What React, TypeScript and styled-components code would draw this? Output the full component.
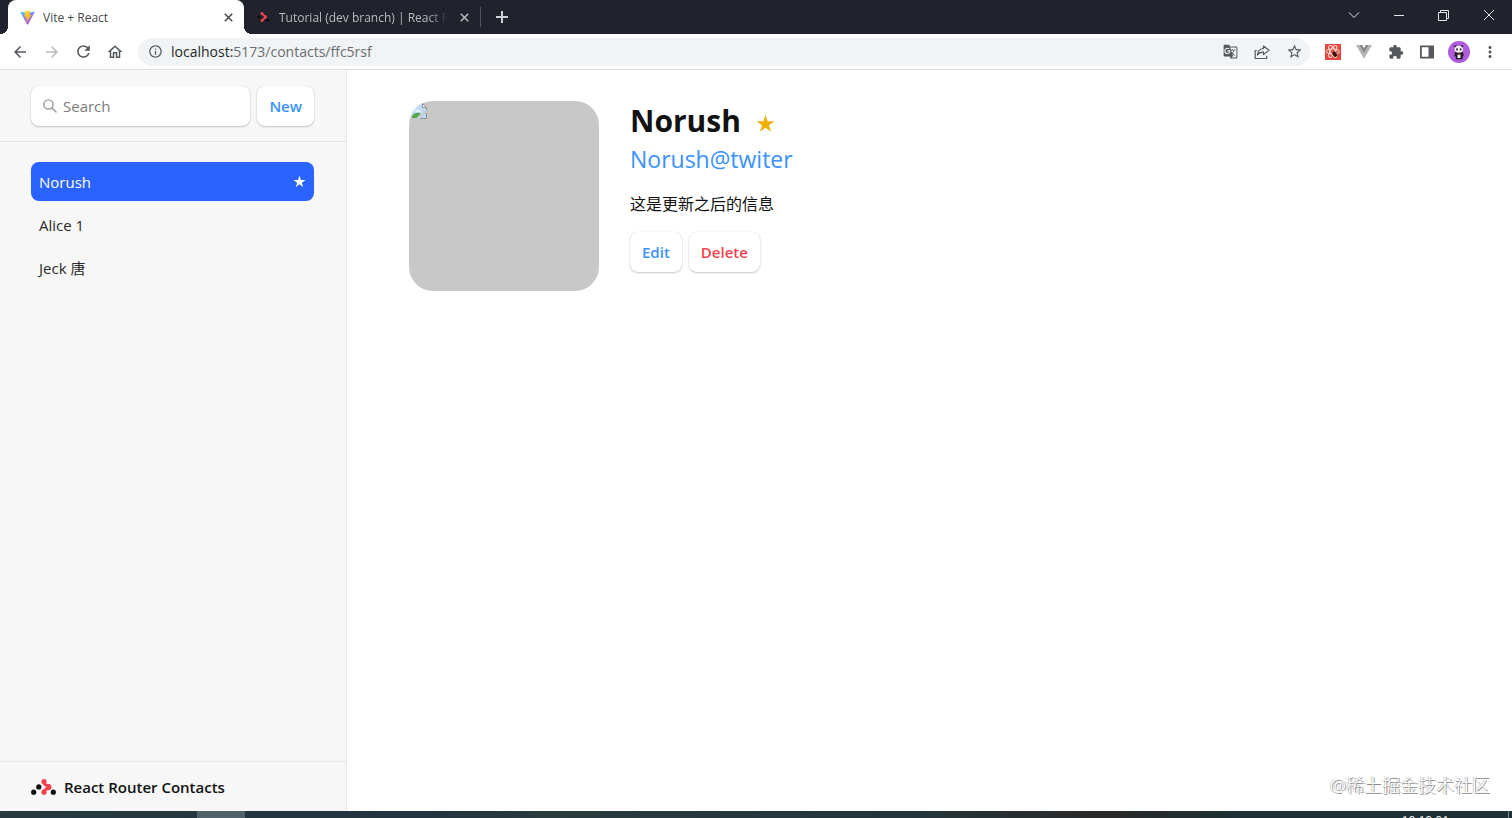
import React from "react";
import styled, { createGlobalStyle } from "styled-components";
import {
  MdArrowBack,
  MdArrowForward,
  MdRefresh,
  MdOutlineHome,
  MdInfoOutline,
  MdExtension,
  MdMoreVert,
  MdStarBorder,
  MdGTranslate,
} from "react-icons/md";

const GlobalStyle = createGlobalStyle`
  *, *::before, *::after { box-sizing: border-box; }
  body {
    margin: 0;
    font-family: "Open Sans", "Noto Sans CJK SC", sans-serif;
    font-size: 15px;
    line-height: 20px;
    color: #121212;
    background: #ffffff;
  }
  button, input { font: inherit; color: inherit; }
  button { border: 0; background: none; padding: 0; cursor: pointer; }
  h1, p, ul { margin: 0; padding: 0; }
  a { color: inherit; text-decoration: none; }
  svg { display: block; flex: none; }
`;

const Screen = styled.div`
  display: flex;
  flex-direction: column;
  min-height: 100vh;
`;

/* Browser tab strip */

const TabStrip = styled.div`
  display: flex;
  height: 34px;
  padding: 0 1px 0 8px;
  background: #20232b;
`;

const Tab = styled.div<{ $active?: boolean }>`
  position: relative;
  display: flex;
  align-items: center;
  gap: 8px;
  width: 236px;
  padding: 0 8px 0 12px;
  border-radius: 8px 8px 0 0;
  font-size: 12px;
  background: ${(p) => (p.$active ? "#ffffff" : "transparent")};
  color: ${(p) => (p.$active ? "#45484c" : "#b9bbbf")};

  &::before, &::after {
    content: "";
    display: ${(p) => (p.$active ? "block" : "none")};
    position: absolute;
    bottom: 0;
    width: 8px;
    height: 8px;
  }
  &::before {
    right: 100%;
    background: radial-gradient(circle at 0 0, transparent 8px, #ffffff 8px);
  }
  &::after {
    left: 100%;
    background: radial-gradient(circle at 100% 0, transparent 8px, #ffffff 8px);
  }
`;

const TabTitle = styled.span<{ $fade?: boolean }>`
  flex: 1;
  min-width: 0;
  padding-top: 2px;
  overflow: hidden;
  white-space: nowrap;
  mask-image: ${(p) =>
    p.$fade ? "linear-gradient(to right, #000 88%, transparent)" : "none"};
`;

const TabButton = styled.button`
  display: grid;
  place-items: center;
  width: 16px;
  height: 16px;
`;

const TabDivider = styled.span`
  align-self: center;
  width: 1px;
  height: 20px;
  background: #50535a;
`;

const NewTabButton = styled.button`
  display: grid;
  place-items: center;
  width: 42px;
  color: #d0d2d5;
`;

const WindowControls = styled.div`
  display: flex;
  margin-left: auto;
`;

const WindowButton = styled.button`
  display: grid;
  place-items: center;
  width: 45px;
  height: 30px;
  color: #e4e5e7;
`;

/* Browser toolbar */

const Toolbar = styled.div`
  display: flex;
  align-items: center;
  gap: 7px;
  height: 36px;
  padding: 0 6px 0 4px;
  border-bottom: 1px solid #dfe1e3;
  background: #ffffff;
  color: #55585c;
`;

const ButtonGroup = styled.div<{ $count: number; $width: number }>`
  display: grid;
  grid-template-columns: repeat(${(p) => p.$count}, 1fr);
  width: ${(p) => p.$width}px;
`;

const ToolButton = styled.button<{ $dim?: boolean }>`
  display: grid;
  place-items: center;
  height: 28px;
  color: ${(p) => (p.$dim ? "#b9bbbe" : "inherit")};
`;

const AddressBar = styled.div`
  display: flex;
  flex: 1;
  align-items: center;
  gap: 8px;
  height: 28px;
  padding-left: 10px;
  border-radius: 14px;
  background: #f1f3f4;
`;

const Url = styled.span`
  flex: 1;
  font-size: 14px;
  color: #6a6d71;
`;

const Host = styled.span`
  color: #24262a;
`;

/* Contacts app */

const Page = styled.div`
  position: relative;
  display: flex;
  flex: 1;
`;

const Sidebar = styled.aside`
  display: flex;
  flex-direction: column;
  width: 347px;
  border-right: 1px solid #e6e6e6;
  background: #f7f7f7;
`;

const SidebarTop = styled.div`
  display: flex;
  gap: 7px;
  padding: 16px 32px 15px 31px;
  border-bottom: 1px solid #e3e3e3;
`;

const SearchForm = styled.form`
  position: relative;
  flex: 1;
  min-width: 0;
`;

const SearchIcon = styled.span`
  position: absolute;
  top: 13px;
  left: 12px;
  color: #999999;
`;

const SearchInput = styled.input`
  width: 100%;
  height: 40px;
  padding: 0 12px 0 32px;
  border: 0;
  border-radius: 8px;
  outline: 0;
  background: #ffffff;
  box-shadow: 0 0 1px rgba(0, 0, 0, 0.2), 0 1px 2px rgba(0, 0, 0, 0.2);

  &::placeholder { color: #7b7b7b; opacity: 1; }
`;

const CardButton = styled.button<{ $danger?: boolean }>`
  height: 40px;
  padding: 0 12px;
  border-radius: 8px;
  background: #ffffff;
  box-shadow: 0 0 1px rgba(0, 0, 0, 0.2), 0 1px 2px rgba(0, 0, 0, 0.2);
  font-weight: 600;
  color: ${(p) => (p.$danger ? "#f44250" : "#3992ff")};
`;

const ContactNav = styled.nav`
  flex: 1;
  padding: 20px 32px 20px 31px;
`;

const ContactList = styled.ul`
  display: flex;
  flex-direction: column;
  gap: 4px;
  list-style: none;
`;

const ContactLink = styled.a<{ $active: boolean }>`
  display: flex;
  align-items: center;
  justify-content: space-between;
  height: 39px;
  padding: 0 8px;
  border-radius: 8px;
  background: ${(p) => (p.$active ? "#2a63ff" : "transparent")};
  color: ${(p) => (p.$active ? "#ffffff" : "#2b2b2b")};
`;

const Brand = styled.footer`
  display: flex;
  align-items: center;
  gap: 8px;
  height: 50px;
  padding: 0 31px;
  border-top: 1px solid #e8e8e8;
  font-weight: 600;
`;

const Detail = styled.main`
  display: flex;
  flex: 1;
  align-items: flex-start;
  gap: 31px;
  padding: 31px 62px;
`;

const Avatar = styled.div`
  width: 190px;
  height: 190px;
  padding: 2px;
  overflow: hidden;
  border-radius: 24px;
  background: #c8c8c8;
`;

const Info = styled.div`
  display: flex;
  flex-direction: column;
  align-items: flex-start;
`;

const NameRow = styled.div`
  display: flex;
  align-items: center;
  gap: 15px;
`;

const Name = styled.h1`
  font-size: 30px;
  font-weight: 700;
  line-height: 40px;
`;

const FavoriteButton = styled.button`
  padding-top: 4px;
  color: #eeb004;
`;

const Twitter = styled.a`
  font-size: 23px;
  line-height: 36px;
  color: #3992ff;
`;

const Notes = styled.p`
  margin: 15px 0 16px;
  font-size: 16px;
  line-height: 24px;
`;

const Actions = styled.div`
  display: flex;
  gap: 7px;
`;

const Watermark = styled.span`
  position: absolute;
  right: 22px;
  bottom: 14px;
  font-size: 18px;
  font-weight: 300;
  line-height: 24px;
  color: #ffffff;
  text-shadow: 1px 1px 0 #8a8a8a, -1px 0 0 #c4c4c4;
`;

/* Top edge of the desktop taskbar */

const Taskbar = styled.div`
  display: flex;
  height: 7px;
  overflow: hidden;
  padding-left: 197px;
  background: linear-gradient(to right, #263a40, #22343f 28%, #293b3d 36%, #24363b 60%, #2a2829 73%, #1d3134 82%, #1d3134);
`;

const TaskbarApp = styled.span`
  width: 48px;
  background: #52626a;
`;

const Clock = styled.span`
  margin-left: auto;
  margin-right: 59px;
  font-size: 12px;
  color: #ffffff;
`;

const ShowDesktop = styled.span`
  width: 4px;
  flex: none;
  border-left: 1px solid #7b898b;
`;

const ViteLogo = () => (
  <svg width="15" height="15" viewBox="0 0 32 32" aria-hidden="true">
    <defs>
      <linearGradient id="viteBody" x1="0" y1="0" x2="0.6" y2="1">
        <stop offset="0" stopColor="#41d1ff" />
        <stop offset="1" stopColor="#bd34fe" />
      </linearGradient>
      <linearGradient id="viteBolt" x1="0" y1="0" x2="0" y2="1">
        <stop offset="0" stopColor="#ffea83" />
        <stop offset="0.2" stopColor="#ffcf26" />
        <stop offset="1" stopColor="#ffa800" />
      </linearGradient>
    </defs>
    <path fill="url(#viteBody)" d="M31.3 4.8 16.8 31c-.3.6-1.2.6-1.5 0L.7 4.8c-.4-.7.2-1.5 1-1.3L16 6l14.300-2.500c.8-.2 1.400.6 1 1.300z" />
    <path fill="url(#viteBolt)" d="M22.400 0 10.300 2.400 9.500 15l4-.8-1.200 5.800 3-.8L13.500 28 24.500 10l-4.300.8L22.700 0z" />
  </svg>
);

const RouterMark = () => (
  <svg width="15" height="15" viewBox="0 0 15 15" aria-hidden="true">
    <path d="M6 3.500c0 2 3.500 1.500 3.500 3.500S6 8.500 6 10.800" fill="none" stroke="#f44250" strokeWidth="1.600" />
    <circle cx="6" cy="3.600" r="1.500" fill="#f44250" />
    <circle cx="9.300" cy="7" r="1.700" fill="#f44250" />
    <circle cx="6" cy="10.500" r="1.500" fill="#f44250" />
    <circle cx="3" cy="7.200" r="1.600" fill="#0b0d10" />
    <circle cx="11.800" cy="10.500" r="1.500" fill="#0b0d10" />
  </svg>
);

const RouterLogo = () => (
  <svg width="25" height="16" viewBox="0 0 25 16" aria-hidden="true">
    <path d="M13 2.700c.4 3 1 3.300 3.600 3.500 3.200.2 3.200 3.600 0 3.800-2.600.2-3.200.5-3.600 3.100" fill="none" stroke="#f44250" strokeWidth="3" strokeLinecap="round" />
    <circle cx="13" cy="2.700" r="2.600" fill="#f44250" />
    <circle cx="17.400" cy="8" r="2.700" fill="#f44250" />
    <circle cx="13" cy="13.200" r="2.600" fill="#f44250" />
    <circle cx="7.800" cy="7.900" r="2.600" fill="#121212" />
    <circle cx="2.700" cy="13.200" r="2.600" fill="#121212" />
    <circle cx="22.300" cy="13.200" r="2.600" fill="#121212" />
  </svg>
);

const Cross = ({ size, weight }: { size: number; weight: number }) => (
  <svg width={size} height={size} viewBox="0 0 12 12" stroke="currentColor" strokeWidth={weight} aria-hidden="true">
    <path d="m1 1 10 10M11 1 1 11" />
  </svg>
);

const Star = ({ size }: { size: number }) => (
  <svg width={size} height={size} viewBox="0 0 20 20" fill="currentColor" aria-hidden="true">
    <path d="m10 .8 2.200 6.800h7.200l-5.800 4.200 2.200 6.900-5.800-4.300-5.800 4.300 2.200-6.900L.6 7.600h7.200z" />
  </svg>
);

const ShareIcon = () => (
  <svg width="16" height="16" viewBox="0 0 16 16" fill="none" stroke="currentColor" strokeWidth="1.200" strokeLinejoin="round" aria-hidden="true">
    <path d="M9.500 2 15 6.300 9.500 10.600V8.200C6.600 8 4.800 8.900 3.400 11c.3-3.700 2.400-6.100 6.100-6.500z" />
    <path d="M2.800 6.500H1.200v8h11.500v-2.700" />
  </svg>
);

const ReactToolsIcon = () => (
  <svg width="16" height="16" viewBox="0 0 16 16" aria-hidden="true">
    <path fill="#e2483d" d="M0 0h16v16H0z" />
    <g fill="none" stroke="#ffe1dd">
      <ellipse cx="7.800" cy="7.500" rx="6.600" ry="2.600" />
      <ellipse cx="7.800" cy="7.500" rx="6.600" ry="2.600" transform="rotate(60 7.800 7.500)" />
      <ellipse cx="7.800" cy="7.500" rx="6.600" ry="2.600" transform="rotate(120 7.800 7.500)" />
    </g>
    <ellipse cx="9.800" cy="10.300" rx="1.900" ry="2.800" fill="#3a120f" transform="rotate(-25 9.800 10.300)" />
    <path d="m6.800 9.500 6 2.500M7.500 12.500l4.500-4" stroke="#3a120f" strokeWidth=".7" />
  </svg>
);

const VueIcon = () => (
  <svg width="16" height="14" viewBox="0 0 16 14" aria-hidden="true">
    <path fill="#b4b4b4" d="M0 0h3.200L8 8.300 12.800 0H16L8 13.800z" />
    <path fill="#858585" d="M3.200 0h3L8 3.200 9.800 0h3L8 8.300z" />
  </svg>
);

const SidePanelIcon = () => (
  <svg width="14" height="14" viewBox="0 0 14 14" aria-hidden="true">
    <path fill="none" stroke="currentColor" strokeWidth="1.800" d="M.9 1.400h12.200v11.200H.9z" />
    <path fill="currentColor" d="M8.500 1h5v12h-5z" />
  </svg>
);

const PandaAvatar = () => (
  <svg width="22" height="22" viewBox="0 0 22 22" aria-hidden="true">
    <circle cx="11" cy="11" r="11" fill="#ae5bdc" />
    <path fill="#1d1a22" d="M6.800 11.500c2-2 6.400-2 8.400 0l.3 3.500-1 .5v2.700H7.800v-2.700L6.500 15z" />
    <circle cx="7.600" cy="5.600" r="1.300" fill="#1d1a22" />
    <circle cx="13.800" cy="5.600" r="1.300" fill="#1d1a22" />
    <ellipse cx="10.800" cy="8.200" rx="4.200" ry="3.500" fill="#f5f2f7" />
    <ellipse cx="9" cy="8.400" rx=".9" ry="1.100" fill="#1d1a22" />
    <ellipse cx="12.600" cy="8.400" rx=".9" ry="1.100" fill="#1d1a22" />
    <path fill="#f5f2f7" d="M9.500 13.500h3v3.500h-3z" />
    <circle cx="11" cy="13.400" r=".8" fill="#d9433c" />
  </svg>
);

const BrokenImage = () => (
  <svg width="16" height="16" viewBox="0 0 16 16" role="img" aria-label="Missing image">
    <path fill="#c3d9f4" d="M1 1h10.500L15 4.500v3L6.500 15H1z" />
    <path fill="#eef5fd" d="M4 8.500c0-2 2.500-2.500 3.300-1 1.600-.5 2.700.5 2.700 1.500z" />
    <path fill="#54a845" d="M1 15v-2c2-3 6-4 9-2.500L5.500 15z" />
    <path fill="#f4f4f4" stroke="#8d9298" d="M11.500.500v4h4z" />
    <path fill="#c3d9f4" d="M15 10v5H9.500z" />
    <path fill="none" stroke="#8d9298" d="M15.500 4.500v3M15.500 10v5.500h-6M.500.500h11" />
  </svg>
);

const contacts = [
  { name: "Norush", favorite: true },
  { name: "Alice 1", favorite: false },
  { name: "Jeck 唐", favorite: false },
];

export default function App() {
  return (
    <Screen>
      <GlobalStyle />
      <TabStrip>
        <Tab $active>
          <ViteLogo />
          <TabTitle>Vite + React</TabTitle>
          <TabButton aria-label="Close tab">
            <Cross size={9} weight={2} />
          </TabButton>
        </Tab>
        <Tab>
          <RouterMark />
          <TabTitle $fade>Tutorial (dev branch) | React Router</TabTitle>
          <TabButton aria-label="Close tab">
            <Cross size={9} weight={2} />
          </TabButton>
        </Tab>
        <TabDivider />
        <NewTabButton aria-label="New tab">
          <svg width="12" height="12" viewBox="0 0 12 12" stroke="currentColor" strokeWidth="2">
            <path d="M6 0v12M0 6h12" />
          </svg>
        </NewTabButton>
        <WindowControls>
          <WindowButton aria-label="Search tabs">
            <svg width="12" height="8" viewBox="0 0 12 8" fill="none" stroke="currentColor">
              <path d="m1 1.500 5 5 5-5" />
            </svg>
          </WindowButton>
          <WindowButton aria-label="Minimize">
            <svg width="10" height="1" viewBox="0 0 10 1" fill="currentColor">
              <path d="M0 0h10v1H0z" />
            </svg>
          </WindowButton>
          <WindowButton aria-label="Restore">
            <svg width="11" height="11" viewBox="0 0 11 11" fill="none" stroke="currentColor">
              <path d="M.5 2.500h8v8h-8zM2.500 2.500v-2h8v8h-2" />
            </svg>
          </WindowButton>
          <WindowButton aria-label="Close window">
            <Cross size={12} weight={1} />
          </WindowButton>
        </WindowControls>
      </TabStrip>

      <Toolbar>
        <ButtonGroup $count={4} $width={127}>
          <ToolButton aria-label="Back"><MdArrowBack size={18} /></ToolButton>
          <ToolButton aria-label="Forward" $dim><MdArrowForward size={18} /></ToolButton>
          <ToolButton aria-label="Reload"><MdRefresh size={19} /></ToolButton>
          <ToolButton aria-label="Home"><MdOutlineHome size={18} /></ToolButton>
        </ButtonGroup>
        <AddressBar>
          <MdInfoOutline size={15} />
          <Url><Host>localhost:</Host>5173/contacts/ffc5rsf</Url>
          <ButtonGroup $count={3} $width={95}>
            <ToolButton aria-label="Translate"><MdGTranslate size={15} /></ToolButton>
            <ToolButton aria-label="Share"><ShareIcon /></ToolButton>
            <ToolButton aria-label="Bookmark"><MdStarBorder size={17} /></ToolButton>
          </ButtonGroup>
        </AddressBar>
        <ButtonGroup $count={6} $width={189}>
          <ToolButton aria-label="React tools"><ReactToolsIcon /></ToolButton>
          <ToolButton aria-label="Vue tools"><VueIcon /></ToolButton>
          <ToolButton aria-label="Extensions"><MdExtension size={16} /></ToolButton>
          <ToolButton aria-label="Side panel"><SidePanelIcon /></ToolButton>
          <ToolButton aria-label="Profile"><PandaAvatar /></ToolButton>
          <ToolButton aria-label="Menu"><MdMoreVert size={18} /></ToolButton>
        </ButtonGroup>
      </Toolbar>

      <Page>
        <Sidebar>
          <SidebarTop>
            <SearchForm role="search">
              <SearchIcon>
                <svg width="14" height="14" viewBox="0 0 15 15" fill="none" stroke="currentColor" strokeWidth="1.500">
                  <circle cx="5.800" cy="5.800" r="4.900" />
                  <path d="m9.300 9.300 4.700 4.700" strokeLinecap="round" />
                </svg>
              </SearchIcon>
              <SearchInput aria-label="Search contacts" placeholder="Search" />
            </SearchForm>
            <CardButton>New</CardButton>
          </SidebarTop>
          <ContactNav>
            <ContactList>
              {contacts.map((c, i) => (
                <li key={c.name}>
                  <ContactLink href="#" $active={i === 0}>
                    {c.name}
                    {c.favorite && <Star size={13} />}
                  </ContactLink>
                </li>
              ))}
            </ContactList>
          </ContactNav>
          <Brand>
            <RouterLogo />
            React Router Contacts
          </Brand>
        </Sidebar>
        <Detail>
          <Avatar><BrokenImage /></Avatar>
          <Info>
            <NameRow>
              <Name>Norush</Name>
              <FavoriteButton aria-label="Remove from favorites"><Star size={19} /></FavoriteButton>
            </NameRow>
            <Twitter href="#">Norush@twiter</Twitter>
            <Notes>这是更新之后的信息</Notes>
            <Actions>
              <CardButton>Edit</CardButton>
              <CardButton $danger>Delete</CardButton>
            </Actions>
          </Info>
        </Detail>
        <Watermark>@稀土掘金技术社区</Watermark>
      </Page>

      <Taskbar>
        <TaskbarApp />
        <Clock>19:19:01</Clock>
        <ShowDesktop />
      </Taskbar>
    </Screen>
  );
}
